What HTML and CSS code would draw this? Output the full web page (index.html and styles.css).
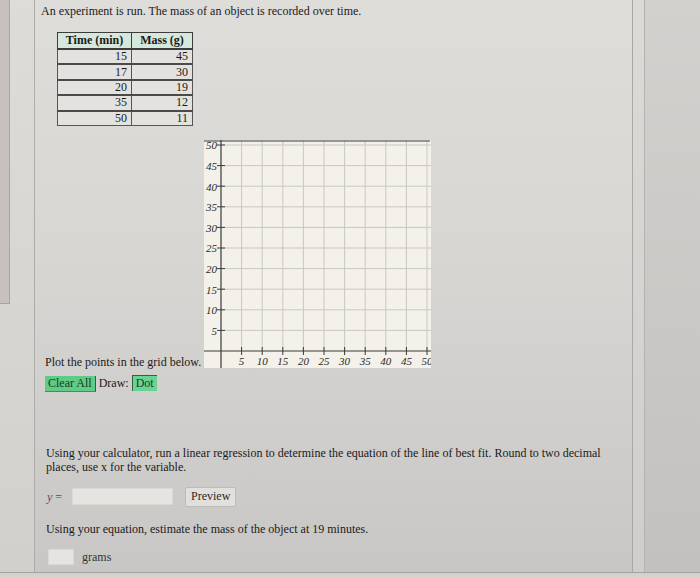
FILE: index.html
```html
<!DOCTYPE html>
<html>
<head>
<meta charset="utf-8">
<link rel="stylesheet" href="styles.css">
</head>
<body>
<div class="screen">
  <div class="left-gutter"><div class="side-tab"></div></div>
  <main class="panel">
    <p class="intro">An experiment is run. The mass of an object is recorded over time.</p>
    <table class="data">
      <thead><tr><th class="c1">Time (min)</th><th class="c2">Mass (g)</th></tr></thead>
      <tbody>
        <tr><td>15</td><td>45</td></tr>
        <tr><td>17</td><td>30</td></tr>
        <tr><td>20</td><td>19</td></tr>
        <tr><td>35</td><td>12</td></tr>
        <tr><td>50</td><td>11</td></tr>
      </tbody>
    </table>
    <div class="plot">Plot the points in the grid below. <svg class="grid" width="227" height="228" viewBox="0 0 227 228">
        <rect x="0" y="0" width="227" height="228" fill="#f3f1ea"/>
        <g stroke="#c9c8c0" stroke-width="1">
          <line x1="37.6" y1="1" x2="37.6" y2="211"/>
          <line x1="58.2" y1="1" x2="58.2" y2="211"/>
          <line x1="78.8" y1="1" x2="78.8" y2="211"/>
          <line x1="99.4" y1="1" x2="99.4" y2="211"/>
          <line x1="120" y1="1" x2="120" y2="211"/>
          <line x1="140.6" y1="1" x2="140.6" y2="211"/>
          <line x1="161.2" y1="1" x2="161.2" y2="211"/>
          <line x1="181.8" y1="1" x2="181.8" y2="211"/>
          <line x1="202.4" y1="1" x2="202.4" y2="211"/>
          <line x1="223" y1="1" x2="223" y2="211"/>
          <line x1="17" y1="190.4" x2="227" y2="190.4"/>
          <line x1="17" y1="169.8" x2="227" y2="169.8"/>
          <line x1="17" y1="149.2" x2="227" y2="149.2"/>
          <line x1="17" y1="128.6" x2="227" y2="128.6"/>
          <line x1="17" y1="108" x2="227" y2="108"/>
          <line x1="17" y1="87.4" x2="227" y2="87.4"/>
          <line x1="17" y1="66.8" x2="227" y2="66.8"/>
          <line x1="17" y1="46.2" x2="227" y2="46.2"/>
          <line x1="17" y1="25.6" x2="227" y2="25.6"/>
          <line x1="17" y1="5" x2="227" y2="5"/>
        </g>
        <g stroke="#3a3a3a" stroke-width="1.2">
          <line x1="0" y1="1" x2="226" y2="1"/>
          <line x1="17" y1="0" x2="17" y2="228"/>
          <line x1="0" y1="211" x2="227" y2="211"/>
        </g>
        <g stroke="#3a3a3a" stroke-width="1">
          <line x1="37.6" y1="207" x2="37.6" y2="215"/>
          <line x1="58.2" y1="207" x2="58.2" y2="215"/>
          <line x1="78.8" y1="207" x2="78.8" y2="215"/>
          <line x1="99.4" y1="207" x2="99.4" y2="215"/>
          <line x1="120" y1="207" x2="120" y2="215"/>
          <line x1="140.6" y1="207" x2="140.6" y2="215"/>
          <line x1="161.2" y1="207" x2="161.2" y2="215"/>
          <line x1="181.8" y1="207" x2="181.8" y2="215"/>
          <line x1="202.4" y1="207" x2="202.4" y2="215"/>
          <line x1="223" y1="207" x2="223" y2="215"/>
          <line x1="13" y1="190.4" x2="21" y2="190.4"/>
          <line x1="13" y1="169.8" x2="21" y2="169.8"/>
          <line x1="13" y1="149.2" x2="21" y2="149.2"/>
          <line x1="13" y1="128.6" x2="21" y2="128.6"/>
          <line x1="13" y1="108" x2="21" y2="108"/>
          <line x1="13" y1="87.4" x2="21" y2="87.4"/>
          <line x1="13" y1="66.8" x2="21" y2="66.8"/>
          <line x1="13" y1="46.2" x2="21" y2="46.2"/>
          <line x1="13" y1="25.6" x2="21" y2="25.6"/>
          <line x1="13" y1="5" x2="21" y2="5"/>
        </g>
        <g class="ylab" text-anchor="end">
          <text x="13" y="194.5">5</text>
          <text x="13" y="174">10</text>
          <text x="13" y="153.5">15</text>
          <text x="13" y="133">20</text>
          <text x="13" y="112">25</text>
          <text x="13" y="91.5">30</text>
          <text x="13" y="71">35</text>
          <text x="13" y="50.5">40</text>
          <text x="13" y="30">45</text>
          <text x="13" y="9">50</text>
        </g>
        <g class="xlab" text-anchor="middle">
          <text x="37.6" y="225">5</text>
          <text x="58.2" y="225">10</text>
          <text x="78.8" y="225">15</text>
          <text x="99.4" y="225">20</text>
          <text x="120" y="225">25</text>
          <text x="140.6" y="225">30</text>
          <text x="161.2" y="225">35</text>
          <text x="181.8" y="225">40</text>
          <text x="202.4" y="225">45</text>
          <text x="223" y="225">50</text>
        </g>
      </svg><br><span class="btn clear">Clear All</span> Draw: <span class="btn dot">Dot</span></div>
    <p class="question">Using your calculator, run a linear regression to determine the equation of the line of best fit. Round to two decimal places, use x for the variable.</p>
    <div class="answer-row"><span class="yeq"><i>y</i> =</span><span class="field wide"></span><button class="preview">Preview</button></div>
    <p class="question2">Using your equation, estimate the mass of the object at 19 minutes.</p>
    <div class="answer-row2"><span class="field small"></span><span class="unit">grams</span></div>
  </main>
  <div class="right-gutter"></div>
  <div class="right-area"></div>
</div>
</body>
</html>
```
FILE: styles.css
```css
html, body {
  margin: 0;
  padding: 0;
}
body {
  width: 700px;
  height: 577px;
  overflow: hidden;
  background: #d4d2cf;
  font-family: "Liberation Serif", "Times New Roman", serif;
  color: #1a1a1a;
}
.screen {
  display: flex;
  width: 700px;
  height: 572px;
  border-bottom: 1px solid #a4a2a0;
}
.left-gutter {
  width: 34px;
  flex: none;
  background: linear-gradient(#dedcd8, #d2d0cc);
  border-right: 1px solid #aeaba8;
}
.side-tab {
  width: 9px;
  height: 303px;
  background: #c6c1be;
  border-right: 1px solid #aaa5a2;
  border-bottom: 1px solid #aaa5a2;
}
.panel {
  width: 598px;
  flex: none;
  background: linear-gradient(#dfddda, #d8d6d3 45%, #c9c7c5);
  border-right: 1px solid #aaa8a6;
  font-size: 12px;
  line-height: 14px;
  padding: 0;
  box-sizing: border-box;
}
.intro {
  margin: 0;
  padding: 4px 0 0 6px;
  height: 32px;
  box-sizing: border-box;
}
.data {
  margin-left: 22px;
  border-collapse: collapse;
  border: 1.5px solid #3c3c3c;
  font-size: 12px;
  line-height: 13px;
}
.data th {
  background: #d6e7dc;
  font-weight: bold;
  text-align: center;
  height: 15px;
  padding: 0 3px;
  border: 1px solid #3c3c3c;
  border-bottom: 2px solid #3c3c3c;
}
.data th.c1 { width: 67px; }
.data th.c2 { width: 54px; }
.data td {
  background: #e4e2df;
  text-align: right;
  height: 13.4px;
  padding: 0 4px 0 0;
  border: 1px solid #555;
  border-top: 2px solid #4a4a4a;
}
.plot {
  margin-top: 14px;
  padding-left: 10px;
  line-height: 14px;
}
.grid {
  vertical-align: -2px;
  display: inline;
}
.ylab text, .xlab text {
  font-family: "Liberation Serif", serif;
  font-style: italic;
  font-size: 11px;
  fill: #2a2a2a;
}
.btn {
  display: inline-block;
  line-height: 14px;
  padding: 0 3px;
  margin-top: 6px;
  color: #1c3a22;
}
.clear {
  background: #5ecb86;
  border-right: 1.5px solid #3c5c44;
  border-bottom: 1px solid #4a8a5c;
  padding: 0 3px 1px 3px;
}
.dot {
  background: #6ad394;
  border-left: 1px solid #3c5c44;
  border-top: 1px solid #3c5c44;
  padding: 0 3px 1px 3px;
}
.question {
  margin: 54px 0 0 0;
  padding-left: 11px;
  width: 575px;
  line-height: 14px;
}
.answer-row {
  display: flex;
  align-items: center;
  margin-top: 13px;
  padding-left: 12px;
  height: 20px;
}
.yeq {
  color: #555;
  font-style: normal;
  width: 25px;
}
.yeq i {
  font-family: "Liberation Serif", serif;
}
.field {
  display: inline-block;
  background: #e6e4e1;
  border: 1px solid #dad8d5;
}
.wide {
  width: 99px;
  height: 15px;
}
.preview {
  margin-left: 12px;
  height: 20px;
  padding: 0 5px;
  font-family: "Liberation Serif", serif;
  font-size: 12px;
  color: #2a2a2a;
  background: #e2e0dd;
  border: 1px solid #bdbbb8;
  border-radius: 2px;
}
.question2 {
  margin: 15px 0 0 0;
  padding-left: 11px;
}
.answer-row2 {
  display: flex;
  align-items: center;
  margin-top: 13px;
  padding-left: 13px;
  height: 16px;
}
.small {
  width: 24px;
  height: 14px;
}
.unit {
  margin-left: 8px;
  color: #333;
}
.right-gutter {
  width: 11px;
  flex: none;
  background: linear-gradient(#dcdad7, #d0cecb);
  border-right: 1px solid #b4b2af;
}
.right-area {
  flex: 1;
  background: linear-gradient(#d3d1ce, #c3c1bf);
}
```
